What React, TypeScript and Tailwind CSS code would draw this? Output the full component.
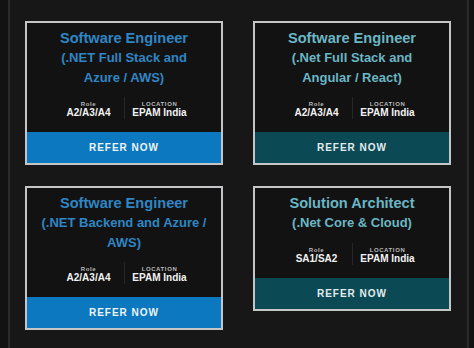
import React from "react";

type Job = {
  lines: string[];
  role: string;
  variant: "blue" | "teal";
};

const jobs: Job[] = [
  { lines: ["Software Engineer", "(.NET Full Stack and", "Azure / AWS)"], role: "A2/A3/A4", variant: "blue" },
  { lines: ["Software Engineer", "(.Net Full Stack and", "Angular / React)"], role: "A2/A3/A4", variant: "teal" },
  { lines: ["Software Engineer", "(.NET Backend and Azure /", "AWS)"], role: "A2/A3/A4", variant: "blue" },
  { lines: ["Solution Architect", "(.Net Core & Cloud)"], role: "SA1/SA2", variant: "teal" },
];

function Card({ job }: { job: Job }) {
  const blue = job.variant === "blue";
  return (
    <div className="border-2 border-[#c3c5c7] bg-[#121212] flex flex-col">
      <div className={`pt-[5px] text-center font-bold ${blue ? "text-[#2f86c4]" : "text-[#6ab6c5]"}`}>
        {job.lines.map((l, i) => (
          <div
            key={i}
            className={i === 0 ? "text-[14.6px] leading-[20px]" : "text-[13px] leading-[19.5px]"}
          >
            {l}
          </div>
        ))}
      </div>
      <div className="mt-[10px] h-[22px] flex justify-center">
        <div className="w-[70px] flex flex-col items-center">
          <div className="mt-[3px] text-[6px] leading-[8px] tracking-[0.6px] text-[#b9b9b9] font-bold">Role</div>
          <div className="text-[10px] leading-[10px] text-[#f2f2f2] font-bold">{job.role}</div>
        </div>
        <div className="w-px bg-[#262626]" />
        <div className="w-[70px] flex flex-col items-center">
          <div className="mt-[3px] text-[6px] leading-[8px] tracking-[0.6px] text-[#b9b9b9] font-bold">LOCATION</div>
          <div className="text-[10px] leading-[10px] text-[#f2f2f2] font-bold">EPAM India</div>
        </div>
      </div>
      <div
        className={`mt-[13px] h-[31px] flex items-center justify-center text-[10px] font-bold tracking-[1px] ${
          blue ? "bg-[#0c78bf] text-[#eef4f8]" : "bg-[#0b4a54] text-[#e2ecee]"
        }`}
      >
        REFER NOW
      </div>
    </div>
  );
}

export default function App() {
  return (
    <div
      className="w-[474px] h-[348px] flex bg-[#171717] overflow-hidden"
      style={{ fontFamily: '"Liberation Sans", Arial, sans-serif' }}
    >
      <div className="w-[8px] bg-[#121212]" />
      <div className="w-[2px] bg-[#2a2a2a]" />
      <div className="flex-1 pt-[21px] pl-[15px]">
        <div className="grid grid-cols-[198px_198px] gap-x-[30px] gap-y-[21px] items-start">
          {jobs.map((j, i) => (
            <Card key={i} job={j} />
          ))}
        </div>
      </div>
      <div className="w-[2px] bg-[#2a2a2a]" />
      <div className="w-[5px] bg-[#121212]" />
    </div>
  );
}
